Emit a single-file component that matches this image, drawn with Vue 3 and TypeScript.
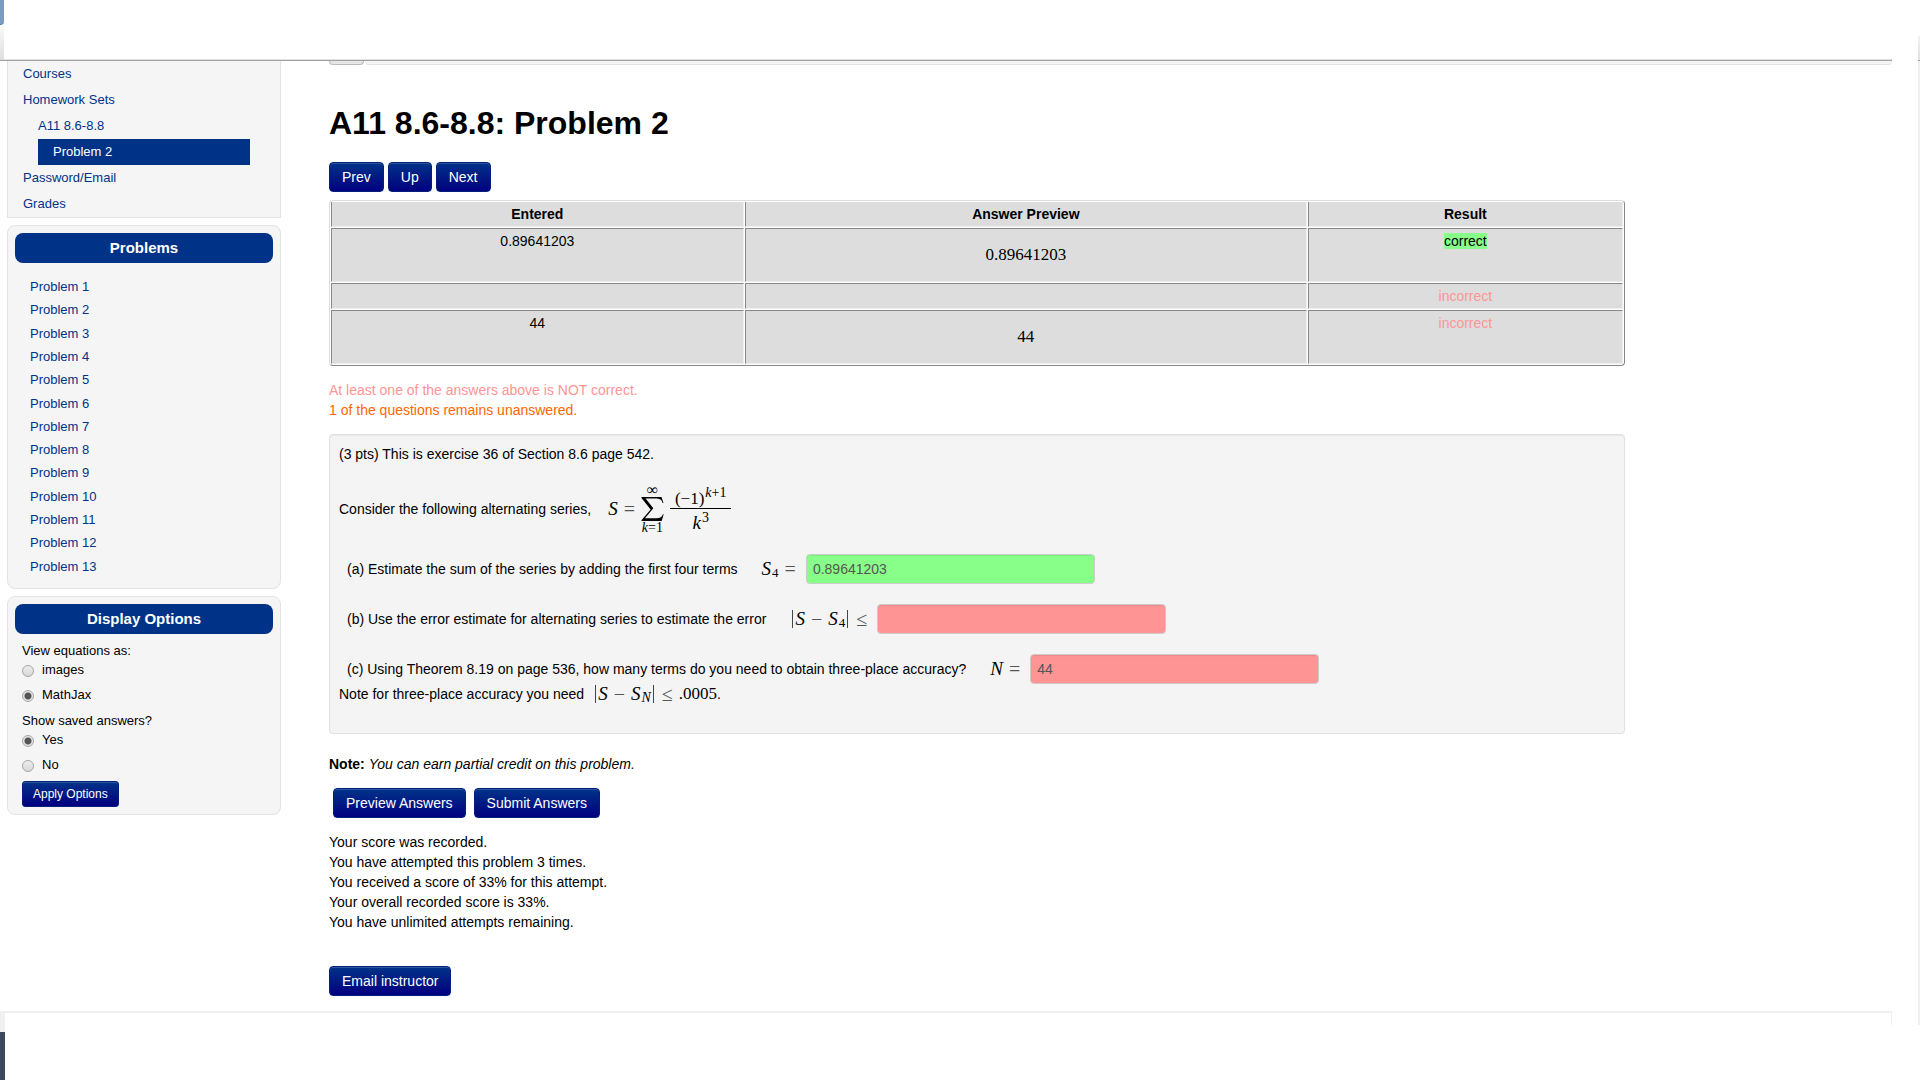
<script setup lang="ts">
import { ref } from 'vue'

const problems: number[] = Array.from({ length: 13 }, (_, i) => i + 1)
const equationMode = ref<string>('MathJax')
const savedAnswers = ref<string>('Yes')
const answerA = ref<string>('0.89641203')
const answerB = ref<string>('')
const answerC = ref<string>('44')

interface ResultRow {
  entered: string
  preview: string
  result: 'correct' | 'incorrect'
}

const results: ResultRow[] = [
  { entered: '0.89641203', preview: '0.89641203', result: 'correct' },
  { entered: '', preview: '', result: 'incorrect' },
  { entered: '44', preview: '44', result: 'incorrect' },
]

const status: string[] = [
  'Your score was recorded.',
  'You have attempted this problem 3 times.',
  'You received a score of 33% for this attempt.',
  'Your overall recorded score is 33%.',
  'You have unlimited attempts remaining.',
]
</script>

<template>
  <div class="page">
    <header class="chrome">
      <div class="chrome-left"><div class="tab-edge"></div></div>
      <div class="chrome-bar"></div>
      <div class="chrome-right"></div>
    </header>

    <div class="body">
      <aside class="sidebar">
        <nav class="panel nav" aria-label="Main">
          <a href="#">Courses</a>
          <a href="#">Homework Sets</a>
          <a href="#" class="sub">A11 8.6-8.8</a>
          <a href="#" class="sub current">Problem 2</a>
          <a href="#">Password/Email</a>
          <a href="#">Grades</a>
        </nav>

        <section class="panel">
          <h2>Problems</h2>
          <ul class="problem-list">
            <li v-for="n in problems" :key="n"><a href="#">Problem {{ n }}</a></li>
          </ul>
        </section>

        <form class="panel" @submit.prevent>
          <h2>Display Options</h2>
          <div class="options">
            <fieldset>
              <legend>View equations as:</legend>
              <label><input v-model="equationMode" type="radio" name="mode" value="images" /><span>images</span></label>
              <label><input v-model="equationMode" type="radio" name="mode" value="MathJax" /><span>MathJax</span></label>
            </fieldset>
            <fieldset>
              <legend>Show saved answers?</legend>
              <label><input v-model="savedAnswers" type="radio" name="saved" value="Yes" /><span>Yes</span></label>
              <label><input v-model="savedAnswers" type="radio" name="saved" value="No" /><span>No</span></label>
            </fieldset>
            <button type="submit" class="btn small">Apply Options</button>
          </div>
        </form>
      </aside>

      <main class="main">
        <div class="crumbs">
          <div class="crumb-button"></div>
          <div class="crumb-bar"></div>
        </div>

        <div class="content">
          <h1>A11 8.6-8.8: Problem 2</h1>
          <div class="pager">
            <button type="button" class="btn">Prev</button>
            <button type="button" class="btn">Up</button>
            <button type="button" class="btn">Next</button>
          </div>

          <table class="results">
            <colgroup>
              <col class="c-entered" />
              <col class="c-preview" />
              <col class="c-result" />
            </colgroup>
            <thead>
              <tr>
                <th scope="col">Entered</th>
                <th scope="col">Answer Preview</th>
                <th scope="col">Result</th>
              </tr>
            </thead>
            <tbody>
              <tr v-for="(row, i) in results" :key="i">
                <td>{{ row.entered }}</td>
                <td><div v-if="row.preview" class="math display">{{ row.preview }}</div></td>
                <td><span :class="row.result">{{ row.result }}</span></td>
              </tr>
            </tbody>
          </table>

          <div class="messages">
            <div class="wrong">At least one of the answers above is NOT correct.</div>
            <div class="unanswered">1 of the questions remains unanswered.</div>
          </div>

          <section class="problem">
            <div class="line">(3 pts) This is exercise 36 of Section 8.6 page 542.</div>

            <div class="line series">
              <span>Consider the following alternating series,</span>
              <span class="math formula">
                <i>S</i>
                <span class="op">=</span>
                <span class="sum">
                  <span class="limit inf">∞</span>
                  <svg class="sigma" viewBox="0 0 23 24" width="23" height="24" aria-label="sum">
                    <path d="M0.5 0H20.5L22.5 6H21.6C20.6 2.8 18.8 1.6 14 1.6H4.6L12.3 11.2L4 21.2H14.5C19 21.2 20.8 20.2 21.9 17.2H22.7L20.7 24H0.5V23.2L9.6 12.5L0.5 1Z" />
                  </svg>
                  <span class="limit"><i>k</i>=1</span>
                </span>
                <span class="frac">
                  <span class="num">(−1)<sup><i>k</i>+1</sup></span>
                  <span class="den"><i>k</i><sup>3</sup></span>
                </span>
              </span>
            </div>

            <div class="line part">
              <label for="ans-a">(a) Estimate the sum of the series by adding the first four terms</label>
              <span class="math formula"><i>S</i><sub>4</sub><span class="op">=</span></span>
              <input id="ans-a" v-model="answerA" type="text" class="answer good" />
            </div>
            <div class="line part">
              <label for="ans-b">(b) Use the error estimate for alternating series to estimate the error</label>
              <span class="math formula"><span class="bar"></span><i>S</i><span class="op">−</span><i>S</i><sub>4</sub><span class="bar"></span><span class="op">≤</span></span>
              <input id="ans-b" v-model="answerB" type="text" class="answer bad" />
            </div>
            <div class="line part last">
              <label for="ans-c">(c) Using Theorem 8.19 on page 536, how many terms do you need to obtain three-place accuracy?</label>
              <span class="math formula"><i>N</i><span class="op">=</span></span>
              <input id="ans-c" v-model="answerC" type="text" class="answer bad" />
            </div>
            <div class="line hint">
              <span>Note for three-place accuracy you need</span>
              <span class="math formula"><span class="bar"></span><i>S</i><span class="op">−</span><i>S</i><sub><i>N</i></sub><span class="bar"></span><span class="op">≤</span>.0005</span><span>.</span>
            </div>
          </section>

          <p class="note"><b>Note:</b> <i>You can earn partial credit on this problem.</i></p>

          <div class="actions">
            <button type="button" class="btn">Preview Answers</button>
            <button type="button" class="btn">Submit Answers</button>
          </div>

          <div class="status">
            <div v-for="s in status" :key="s">{{ s }}</div>
          </div>

          <button type="button" class="btn">Email instructor</button>
        </div>
      </main>

      <div class="scroll-edge"></div>
    </div>

    <footer class="footer">
      <div class="footer-left"></div>
      <div class="footer-box"></div>
      <div class="footer-right"></div>
    </footer>
  </div>
</template>

<style>
body {
  margin: 0;
  background: #fff;
}
</style>

<style scoped>
* {
  box-sizing: border-box;
}
.page {
  min-height: 100vh;
  display: flex;
  flex-direction: column;
  font: 14px/20px "Liberation Sans", Arial, sans-serif;
  color: #000;
}
a {
  color: #038;
  text-decoration: none;
}

/* window frame above the page */
.chrome {
  display: flex;
  height: 61px;
}
.chrome-left {
  width: 4px;
  border-bottom: 1px solid #a0a0a0;
  background: linear-gradient(#fafafa 25px, #dedede);
}
.tab-edge {
  height: 25px;
  background: #7a9cc0;
  border-bottom: 1px solid #5d7b9c;
  border-bottom-right-radius: 4px;
}
.chrome-bar {
  flex: 1;
  border-bottom: 1px solid #a0a0a0;
  box-shadow: inset 0 -1px #e2e2e2;
}
.chrome-right {
  width: 2px;
  margin: 36px 0 0 26px;
  border-bottom: 1px solid #a0a0a0;
  background: linear-gradient(#f2f2f2, #dedede);
}

.body {
  display: flex;
}
.scroll-edge {
  width: 2px;
  margin-left: 26px;
  background: #f0f0f0;
}

/* sidebar */
.sidebar {
  width: 274px;
  margin: 0 48px 0 7px;
  flex: none;
  display: flex;
  flex-direction: column;
  gap: 7px;
  font-size: 13px;
}
.panel {
  padding: 7px;
  background: #f5f5f5;
  border: 1px solid #e3e3e3;
  border-radius: 8px;
}
.nav {
  display: flex;
  flex-direction: column;
  padding: 0 30px 0 15px;
  border-top: 0;
  border-radius: 0;
}
.nav a {
  line-height: 26px;
}
.nav .sub {
  margin-left: 15px;
}
.nav .current {
  padding-left: 15px;
  background: #038;
  color: #fff;
}
h2 {
  margin: 0;
  border-radius: 8px;
  background: #038;
  color: #fff;
  font-size: 15px;
  line-height: 30px;
  text-align: center;
}
.problem-list {
  display: grid;
  grid-auto-rows: 1fr;
  height: 303px;
  margin: 12px 0 3px;
  padding: 0 0 0 15px;
  list-style: none;
  line-height: 23px;
}
.options {
  padding: 7px 7px 0;
}
fieldset {
  margin: 0 0 5px;
  padding: 0;
  border: 0;
}
legend {
  padding: 0;
  line-height: 20px;
}
fieldset label {
  display: flex;
  align-items: center;
  gap: 8px;
  height: 20px;
}
fieldset label + label {
  margin-top: 5px;
}
fieldset label span {
  padding-bottom: 3px;
}
input[type="radio"] {
  appearance: none;
  width: 12px;
  height: 12px;
  margin: 0;
  border: 1px solid #a6a6a6;
  border-radius: 50%;
  background: linear-gradient(#eee, #d8d8d8);
}
input[type="radio"]:checked {
  background: radial-gradient(circle, #555 3px, #e4e4e4 4px);
}

/* buttons */
.btn {
  height: 30px;
  padding: 0 12px;
  border: 1px solid #00207a;
  border-radius: 4px;
  background: linear-gradient(#038, #000080);
  box-shadow: inset 0 1px #2c569b;
  color: #fff;
  font: inherit;
}
.btn.small {
  display: block;
  height: 26px;
  padding: 0 10px;
  border-radius: 3px;
  font-size: 12px;
}

/* main column */
.main {
  flex: 1;
  min-width: 0;
}
.crumbs {
  display: flex;
  gap: 1px;
  height: 4px;
}
.crumb-button {
  width: 35px;
  border: 1px solid #bbb;
  border-top: 0;
  border-radius: 0 0 4px 4px;
  background: #e6e6e6;
}
.crumb-bar {
  flex: 1;
  border-bottom: 1px solid #e3e3e3;
  border-radius: 0 0 4px 4px;
  background: #f5f5f5;
}
.content {
  width: 82.9%;
  padding-bottom: 15px;
}
h1 {
  margin: 38px 0 19px;
  font-size: 32px;
  line-height: 40px;
}
.pager {
  display: flex;
  gap: 4px;
  margin-bottom: 8px;
}

.results {
  width: 100%;
  table-layout: fixed;
  border-collapse: separate;
  border-spacing: 1px;
  border: 1px solid;
  border-color: #ddd #888 #888 #ddd;
  border-radius: 4px;
}
.c-entered {
  width: 32%;
}
.c-preview {
  width: 43.6%;
}
.c-result {
  width: 24.4%;
}
.results th,
.results td {
  height: 26px;
  padding: 2px 4px;
  border: 1px solid;
  border-color: #888 #eee #eee #888;
  background: #ddd;
  text-align: center;
  vertical-align: top;
}
.results th {
  height: 25px;
  border-top: 0;
}
.correct {
  background: #8f8;
}
.incorrect,
.wrong {
  color: #ff9494;
}
.unanswered {
  color: #f60;
}
.messages {
  margin: 14px 0;
}

.math {
  font-family: "Liberation Serif", "Times New Roman", serif;
  font-size: 17px;
}
.display {
  padding: 14px 0;
}

.problem {
  padding: 9px 9px 29px;
  background: #f4f4f4;
  border: 1px solid #e0e0e0;
  border-radius: 4px;
  box-shadow: inset 0 1px 1px #e8e8e8;
}
.line {
  display: flex;
  align-items: center;
}
.series {
  height: 58px;
  margin: 16px 0;
}
.part {
  height: 30px;
  margin-bottom: 20px;
  padding-left: 8px;
}
.part.last {
  margin-bottom: 0;
}
.hint {
  height: 20px;
}
.formula {
  display: inline-flex;
  align-items: center;
  margin-left: 24px;
}
.formula i {
  font-size: 19px;
}
.series .formula {
  margin-left: 17px;
}
.hint .formula {
  margin-left: 9px;
}
.op {
  margin: 0 6px;
  color: #555;
  font-size: 20px;
}
.formula > sub {
  align-self: flex-end;
  margin-left: 1px;
  font-size: 13px;
  line-height: 12px;
  vertical-align: baseline;
}
.formula sub i,
.formula sup i,
.formula .limit i {
  font-size: 14px;
}
.bar {
  width: 1px;
  height: 18px;
  margin: 0 2px;
  background: #444;
}
.sum {
  display: flex;
  flex-direction: column;
  align-items: center;
  gap: 1px;
  margin-right: 6px;
}
.limit {
  font-size: 14px;
  line-height: 12px;
}
.inf {
  font-size: 16px;
}
.frac {
  display: flex;
  flex-direction: column;
  text-align: center;
}
.num,
.den {
  height: 22px;
  padding: 0 5px;
}
.num {
  border-bottom: 1px solid #000;
  line-height: 16px;
}
.den {
  line-height: 28px;
}
.frac sup {
  margin-left: 1px;
  font-size: 14px;
  line-height: 12px;
}
.answer {
  width: 289px;
  height: 30px;
  margin-left: 4px;
  padding: 0 6px;
  border: 1px solid #ccc;
  border-radius: 4px;
  box-shadow: inset 0 1px 1px rgba(0, 0, 0, 0.08);
  color: #555;
  font: inherit;
}
.good {
  background: #8f8;
}
.bad {
  background: #ff9494;
}
.note {
  margin: 20px 0 14px;
}
.actions {
  display: flex;
  gap: 8px;
  padding-left: 4px;
}
.status {
  margin: 14px 0 34px;
}

/* bottom frame */
.footer {
  display: flex;
  flex: 1;
}
.footer-left {
  width: 5px;
  background: linear-gradient(#f0f0f0 21px, #3a4a5a 21px);
}
.footer-box {
  flex: 1;
  height: 14px;
  border-top: 2px solid #f0f0f0;
  border-right: 1px solid #f0f0f0;
}
.footer-right {
  width: 2px;
  height: 14px;
  margin-left: 26px;
  background: #f0f0f0;
}
</style>
